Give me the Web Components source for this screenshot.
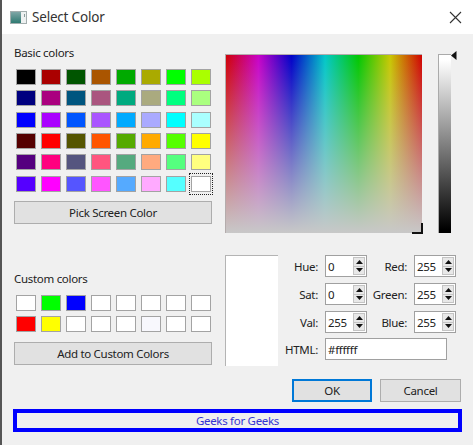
<!DOCTYPE html>
<html>
<head>
<meta charset="utf-8">
<title>Select Color</title>
<style>
    html, body { margin: 0; padding: 0; background: #f0f0f0; }
    body { font-family: "Noto Sans", "Open Sans", sans-serif; font-size: 11.5px; letter-spacing: -0.3px; color: #222; }
</style>
</head>
<body>
<color-dialog></color-dialog>

<script>
class TitleBar extends HTMLElement {
    constructor() {
        super();
        this.attachShadow({ mode: 'open' });
        this.shadowRoot.innerHTML = `
            <style>
                :host { display: flex; align-items: center; height: 34px; background: #fff; padding: 0 11px 0 8px; }
                svg.icon { width: 17px; height: 13px; margin-right: 5px; }
                span { flex: 1; font-size: 13.5px; letter-spacing: -0.2px; color: #333; }
                svg.close { width: 13px; height: 13px; }
            </style>
            <svg class="icon" viewBox="0 0 17 13">
                <defs>
                    <linearGradient id="pane" x1="0" y1="0" x2="0" y2="1">
                        <stop offset="0" stop-color="#7fa6a6"/>
                        <stop offset="1" stop-color="#2f7a72"/>
                    </linearGradient>
                </defs>
                <rect x="0.5" y="0.5" width="16" height="12" fill="#eef1f1" stroke="#a3aeae"/>
                <rect x="1" y="1" width="10" height="11" fill="url(#pane)"/>
                <rect x="14" y="3" width="1" height="3" fill="#8a9a9a"/>
            </svg>
            <span><slot></slot></span>
            <svg class="close" viewBox="0 0 13 13" fill="none" stroke="#333" stroke-width="1.1">
                <path d="M1 1 12 12M12 1 1 12"/>
            </svg>
        `;
    }
}

class ColorSwatch extends HTMLElement {
    constructor() {
        super();
        this.attachShadow({ mode: 'open' });
        const color = this.getAttribute('color') || '#fff';
        this.shadowRoot.innerHTML = `
            <style>
                :host { display: block; box-sizing: border-box; width: 20px; height: 16px; border: 1px solid #a3a3a3; background: ${color}; position: relative; }
                :host([selected])::after { content: ""; position: absolute; inset: -4px -3px; border: 1px dotted #222; }
            </style>
        `;
    }
}

class SwatchGrid extends HTMLElement {
    constructor() {
        super();
        this.attachShadow({ mode: 'open' });
        this.shadowRoot.innerHTML = `
            <style>
                :host { display: grid; grid-template-columns: repeat(8, 20px); column-gap: 5px; row-gap: 5.33px; padding-left: 2px; }
            </style>
            <slot></slot>
        `;
    }

    connectedCallback() {
        const colors = (this.getAttribute('colors') || '').split(' ');
        const selected = this.getAttribute('selected-index');
        colors.forEach((color, i) => {
            const swatch = document.createElement('div');
            swatch.innerHTML = `<color-swatch color="${color}"${String(i) === selected ? ' selected' : ''}></color-swatch>`;
            this.appendChild(swatch.firstElementChild);
        });
    }
}

class DialogButton extends HTMLElement {
    constructor() {
        super();
        this.attachShadow({ mode: 'open' });
        this.shadowRoot.innerHTML = `
            <style>
                :host { display: flex; align-items: center; justify-content: center; box-sizing: border-box; height: 23px; background: #e1e1e1; border: 1px solid #adadad; color: #222; }
                :host([default]) { border: 2px solid #0078d7; }
            </style>
            <slot></slot>
        `;
    }
}

class HsvPicker extends HTMLElement {
    constructor() {
        super();
        this.attachShadow({ mode: 'open' });
        this.shadowRoot.innerHTML = `
            <style>
                :host { display: flex; height: 179px; }
                .field {
                    width: 197px; position: relative;
                    box-shadow: inset 1px 1px 0 #b4acac;
                    background:
                        linear-gradient(to bottom, rgba(200,200,200,0), #c8c8c8),
                        linear-gradient(to right, #d00000, #c800c8 17%, #0000c8 33.8%, #00c8c8 50.8%, #00c800 67.7%, #c8c800 83.8%, #d00000);
                }
                .cross { position: absolute; right: -1px; bottom: -1px; width: 9px; height: 9px; border-right: 2px solid #111; border-bottom: 2px solid #111; }
                .value { box-sizing: border-box; width: 13px; margin-left: 16px; position: relative; border: 1px solid #aaa; border-width: 1px 0 0 1px; background: linear-gradient(to bottom, #fff 3%, #000 98%); }
                .arrow { position: absolute; left: 12px; top: -4px; width: 6px; height: 9px; }
            </style>
            <div class="field"><div class="cross"></div></div>
            <div class="value">
                <svg class="arrow" viewBox="0 0 6 9"><path d="M5.5 0V9L0 4.5Z" fill="#111"/></svg>
            </div>
        `;
    }
}

class SpinField extends HTMLElement {
    constructor() {
        super();
        this.attachShadow({ mode: 'open' });
        this.shadowRoot.innerHTML = `
            <style>
                :host { display: flex; box-sizing: border-box; height: 22px; border: 1px solid #a0a0a0; background: #fff; align-items: center; padding-left: 2px; }
                .text { flex: 1; }
                .steps { display: flex; flex-direction: column; width: 12px; height: 18px; margin-right: 1px; }
                .steps div { flex: 1; box-sizing: border-box; border: 1px solid #c4c4c4; background: #e8e8e8; display: flex; align-items: center; justify-content: center; }
                .steps div + div { border-top: 0; }
                svg { width: 7px; height: 4px; }
            </style>
            <div class="text"><slot></slot></div>
            <div class="steps">
                <div><svg viewBox="0 0 7 4"><path d="M3.5 0 7 4H0Z" fill="#111"/></svg></div>
                <div><svg viewBox="0 0 7 4"><path d="M0 0H7L3.5 4Z" fill="#111"/></svg></div>
            </div>
        `;
    }
}

class ColorForm extends HTMLElement {
    constructor() {
        super();
        this.attachShadow({ mode: 'open' });
        const rows = [['Hue:', '0', 'Red:', '255'], ['Sat:', '0', 'Green:', '255'], ['Val:', '255', 'Blue:', '255']];
        this.shadowRoot.innerHTML = `
            <style>
                :host { display: grid; grid-template-columns: 40px 42px 33px 42px; column-gap: 7px; row-gap: 6px; grid-auto-rows: 22px; }
                label { display: flex; align-items: center; justify-content: flex-end; white-space: nowrap; }
                .html { grid-column: 2 / 5; margin: -1px 9px 0 0; box-sizing: border-box; height: 22px; border: 1px solid #a0a0a0; background: #fff; padding-left: 2px; display: flex; align-items: center; }
                .html-label { margin-top: -1px; }
            </style>
            ${rows.map(r => `
                <label>${r[0]}</label><spin-field>${r[1]}</spin-field>
                <label>${r[2]}</label><spin-field>${r[3]}</spin-field>
            `).join('')}
            <label class="html-label">HTML:</label>
            <div class="html">#ffffff</div>
        `;
    }
}

class ColorDialog extends HTMLElement {
    constructor() {
        super();
        this.attachShadow({ mode: 'open' });
        const basic = '#000000 #aa0000 #005500 #aa5500 #00aa00 #aaaa00 #00ff00 #aaff00 ' +
            '#00007f #aa007f #00557f #aa557f #00aa7f #aaaa7f #00ff7f #aaff7f ' +
            '#0000ff #aa00ff #0055ff #aa55ff #00aaff #aaaaff #00ffff #aaffff ' +
            '#550000 #ff0000 #555500 #ff5500 #55aa00 #ffaa00 #55ff00 #ffff00 ' +
            '#55007f #ff007f #55557f #ff557f #55aa7f #ffaa7f #55ff7f #ffff7f ' +
            '#5500ff #ff00ff #5555ff #ff55ff #55aaff #ffaaff #55ffff #ffffff';
        const custom = '#ffffff #00ff00 #0000ff #ffffff #ffffff #ffffff #ffffff #ffffff ' +
            '#ff0000 #ffff00 #ffffff #ffffff #ffffff #f8f8fd #ffffff #ffffff';
        this.shadowRoot.innerHTML = `
            <style>
                :host { display: block; box-sizing: border-box; height: 445px; border-left: 2px solid #555; border-right: 1px solid #fff; background: #f0f0f0; overflow: hidden; }
                .body { padding: 11px 12px 0; }
                .main { display: grid; grid-template-columns: 198px 1fr; column-gap: 13px; }
                .left, .right { display: flex; flex-direction: column; }
                .right { padding-top: 9px; }
                .caption { height: 16px; line-height: 16px; margin-bottom: 8px; }
                .pick { margin-top: 9.5px; }
                .add { margin-top: 10px; }
                .custom { margin-top: 46.5px; }
                .lower { display: flex; margin-top: 22px; }
                .preview { box-sizing: border-box; width: 53px; height: 111px; background: #fff; border: 1px solid #b4b4b4; border-width: 1px 0 0 1px; }
                .actions { display: flex; justify-content: flex-end; gap: 8px; margin-top: 13px; }
                .ok { width: 80px; }
                .cancel { width: 81px; }
                .banner { box-sizing: border-box; height: 23px; margin: 7px -1px 0; border: 4px solid #0000ff; display: flex; align-items: center; justify-content: center; color: #3535d0; }
            </style>
            <title-bar>Select Color</title-bar>
            <div class="body">
                <div class="main">
                    <div class="left">
                        <div class="caption">Basic colors</div>
                        <swatch-grid colors="${basic}" selected-index="47"></swatch-grid>
                        <dialog-button class="pick">Pick Screen Color</dialog-button>
                        <div class="caption custom">Custom colors</div>
                        <swatch-grid colors="${custom}"></swatch-grid>
                        <dialog-button class="add">Add to Custom Colors</dialog-button>
                    </div>
                    <div class="right">
                        <hsv-picker></hsv-picker>
                        <div class="lower">
                            <div class="preview"></div>
                            <color-form></color-form>
                        </div>
                    </div>
                </div>
                <div class="actions">
                    <dialog-button class="ok" default>OK</dialog-button>
                    <dialog-button class="cancel">Cancel</dialog-button>
                </div>
                <div class="banner">Geeks for Geeks</div>
            </div>
        `;
    }
}

customElements.define('title-bar', TitleBar);
customElements.define('color-swatch', ColorSwatch);
customElements.define('swatch-grid', SwatchGrid);
customElements.define('dialog-button', DialogButton);
customElements.define('hsv-picker', HsvPicker);
customElements.define('spin-field', SpinField);
customElements.define('color-form', ColorForm);
customElements.define('color-dialog', ColorDialog);
</script>
</body>
</html>
